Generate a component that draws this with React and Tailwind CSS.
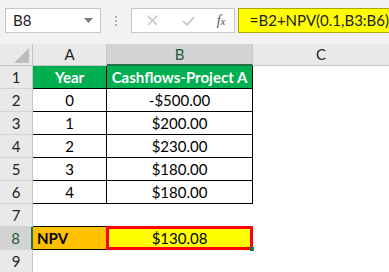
import React from 'react';

const rows = [
  { n: 1, a: 'Year', b: 'Cashflows-Project A', head: true },
  { n: 2, a: '0', b: '-$500.00' },
  { n: 3, a: '1', b: '$200.00' },
  { n: 4, a: '2', b: '$230.00' },
  { n: 5, a: '3', b: '$180.00' },
  { n: 6, a: '4', b: '$180.00' },
];

const RowHead = ({ n, active }) => (
  <div
    className={`w-[33px] h-[23px] shrink-0 flex items-center justify-center border-b border-[#d4d4d4] ${
      active ? 'bg-[#d3d3d3] text-[#1d5a3a] border-r-2 border-r-[#217346]' : 'bg-[#e9e9e9] text-[#222] border-r border-r-[#c6c6c6]'
    }`}
  >
    {n}
  </div>
);

const App = () => {
  return (
    <div className="w-[389px] h-[272px] overflow-hidden bg-white text-[15px] text-black" style={{ fontFamily: 'Lato, "Liberation Sans", sans-serif' }}>
      {/* formula bar */}
      <div className="h-[44px] bg-[#f2f2f2] flex items-start pt-[8px]">
        <div className="ml-[5px] w-[101px] h-[25px] bg-white border border-[#c6c6c6] flex items-center justify-between pl-[7px] pr-[7px]">
          <span className="text-[15px] text-[#222]">B8</span>
          <svg width="9" height="5" viewBox="0 0 9 5"><path d="M0 0h9L4.5 5z" fill="#7a7a7a" /></svg>
        </div>
        <div className="w-[31px] h-[25px] flex flex-col items-center justify-center gap-[2px]">
          <span className="w-[2px] h-[2px] bg-[#b0b0b0]" />
          <span className="w-[2px] h-[2px] bg-[#b0b0b0]" />
          <span className="w-[2px] h-[2px] bg-[#b0b0b0]" />
        </div>
        <div className="w-[110px] h-[25px] bg-white border border-[#c6c6c6] flex items-center">
          <svg className="ml-[15px]" width="11" height="11" viewBox="0 0 11 11">
            <path d="M1 1l9 9M10 1l-9 9" stroke="#c2c2c2" strokeWidth="1.4" />
          </svg>
          <svg className="ml-[24px]" width="13" height="10" viewBox="0 0 13 10">
            <path d="M1 5l4 4 7-8" stroke="#c2c2c2" strokeWidth="1.6" fill="none" />
          </svg>
          <span className="ml-[22px] italic text-[#555] text-[14px]" style={{ fontFamily: '"Liberation Serif", serif' }}>
            f<span className="text-[11px]">x</span>
          </span>
        </div>
        <div className="ml-[3px] flex-1 h-[25px] bg-[#ffff00] border border-r-0 border-[#a8a800] flex items-center pl-[11px]">
          <span className="text-[15px] text-[#222]">=B2+NPV(0.1,B3:B6)</span>
        </div>
      </div>

      {/* column headers */}
      <div className="flex h-[22px]">
        <div className="w-[33px] h-full bg-[#e9e9e9] border-r border-b border-[#c6c6c6] flex items-end justify-end pr-[3px] pb-[2px]">
          <svg width="15" height="15" viewBox="0 0 15 15"><path d="M15 0v15H0z" fill="#bdbdbd" /></svg>
        </div>
        <div className="w-[74px] h-full bg-[#e9e9e9] border-r border-b border-[#c6c6c6] flex items-center justify-center text-[#222]">A</div>
        <div className="w-[146px] h-full bg-[#d3d3d3] border-r border-[#c6c6c6] border-b-2 border-b-[#217346] flex items-center justify-center text-[#1d5a3a]">B</div>
        <div className="flex-1 h-full bg-[#e9e9e9] border-b border-[#c6c6c6] flex items-center justify-center text-[#222]">C</div>
      </div>

      {rows.map((r) => (
        <div key={r.n} className="flex h-[23px]">
          <RowHead n={r.n} />
          <div className={`w-[74px] h-full border-r border-b border-black flex items-center justify-center ${r.head ? 'bg-[#00b050] text-white font-bold' : ''}`}>
            {r.a}
          </div>
          <div className={`w-[146px] h-full border-r border-b border-black flex items-center justify-center ${r.head ? 'bg-[#00b050] text-white font-bold' : ''}`}>
            {r.b}
          </div>
          <div className="flex-1" />
        </div>
      ))}

      <div className="flex h-[23px]">
        <RowHead n={7} />
        <div className="flex-1 border-b border-black w-[220px] max-w-[220px]" />
      </div>

      <div className="flex h-[23px]">
        <RowHead n={8} active />
        <div className="w-[73px] h-full bg-[#ffc000] border-b border-black flex items-center pl-[4px] font-bold">NPV</div>
        <div className="relative w-[147px] h-[24px] -mt-px bg-[#ffff00] border-[3px] border-[#ff0000] flex items-center justify-center">
          $130.08
          <span className="absolute -right-[4px] -bottom-[4px] w-[4px] h-[4px] bg-[#217346]" />
        </div>
        <div className="flex-1" />
      </div>

      <div className="flex h-[23px]">
        <RowHead n={9} />
      </div>
    </div>
  );
};

export default App;
